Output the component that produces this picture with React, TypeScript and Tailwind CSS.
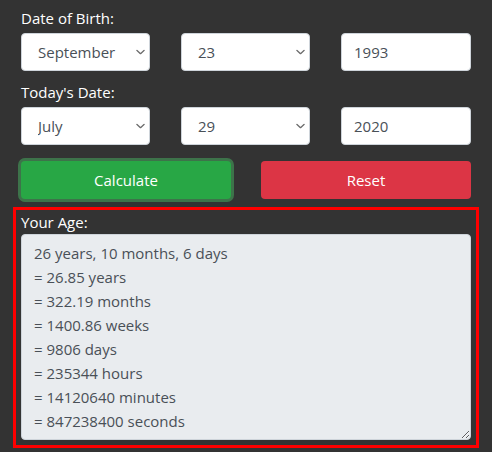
import { useState } from "react";

const MONTHS = [
  "January", "February", "March", "April", "May", "June",
  "July", "August", "September", "October", "November", "December",
];
const DAYS = Array.from({ length: 31 }, (_, i) => String(i + 1));

const lines = [
  "26 years, 10 months, 6 days",
  "= 26.85 years",
  "= 322.19 months",
  "= 1400.86 weeks",
  "= 9806 days",
  "= 235344 hours",
  "= 14120640 minutes",
  "= 847238400 seconds",
];

function Chevron() {
  return (
    <svg width="9" height="5" viewBox="0 0 9 5" className="pointer-events-none absolute right-[5px] top-1/2 -translate-y-1/2">
      <path d="M0.5 0.5 L4.5 4.3 L8.5 0.5" fill="none" stroke="#6b6b6b" strokeWidth="1.2" />
    </svg>
  );
}

function Select({ value, options, onChange }: { value: string; options: string[]; onChange: (v: string) => void }) {
  return (
    <div className="relative">
      <select
        value={value}
        onChange={(e) => onChange(e.target.value)}
        className="h-[38px] w-full appearance-none rounded-[4px] border border-[#ced4da] bg-white pl-4 pr-6 text-[15px] leading-6 text-[#495057] outline-none"
      >
        {options.map((o) => (
          <option key={o}>{o}</option>
        ))}
      </select>
      <Chevron />
    </div>
  );
}

function Field({ value, onChange }: { value: string; onChange: (v: string) => void }) {
  return (
    <input
      value={value}
      onChange={(e) => onChange(e.target.value)}
      className="h-[38px] w-full rounded-[4px] border border-[#ced4da] bg-white px-3 text-[15px] leading-6 text-[#495057] outline-none"
    />
  );
}

export default function App() {
  const [bMonth, setBMonth] = useState("September");
  const [bDay, setBDay] = useState("23");
  const [bYear, setBYear] = useState("1993");
  const [tMonth, setTMonth] = useState("July");
  const [tDay, setTDay] = useState("29");
  const [tYear, setTYear] = useState("2020");

  return (
    <div className="min-h-[452px] w-[492px] bg-[#333333] px-[21px] pt-[6px] font-['Open_Sans',sans-serif] text-[15px] text-white">
      <label className="block leading-6">Date of Birth:</label>
      <div className="mt-[3px] grid grid-cols-[129px_129px_130px] justify-between">
        <Select value={bMonth} options={MONTHS} onChange={setBMonth} />
        <Select value={bDay} options={DAYS} onChange={setBDay} />
        <Field value={bYear} onChange={setBYear} />
      </div>

      <label className="mt-[9px] block leading-6">Today's Date:</label>
      <div className="mt-[3px] grid grid-cols-[129px_129px_130px] justify-between">
        <Select value={tMonth} options={MONTHS} onChange={setTMonth} />
        <Select value={tDay} options={DAYS} onChange={setTDay} />
        <Field value={tYear} onChange={setTYear} />
      </div>

      <div className="mt-[16px] grid grid-cols-2 gap-[30px]">
        <button className="h-[38px] rounded-[4px] bg-[#28a745] text-white shadow-[0_0_0_3px_rgba(72,180,97,0.5)]">
          Calculate
        </button>
        <button className="h-[38px] rounded-[4px] bg-[#dc3545] text-white">Reset</button>
      </div>

      <div className="mx-[-8px] mt-[8px] border-[3px] border-[#ff0000] px-[5px] pb-[5px]">
        <label className="block leading-6">Your Age:</label>
        <textarea
          readOnly
          value={lines.join("\n")}
          className="block h-[206px] w-full overflow-hidden rounded-[4px] border border-[#ced4da] bg-[#e9ecef] px-3 py-[6px] text-[15px] leading-6 text-[#495057] outline-none"
        />
      </div>
    </div>
  );
}
